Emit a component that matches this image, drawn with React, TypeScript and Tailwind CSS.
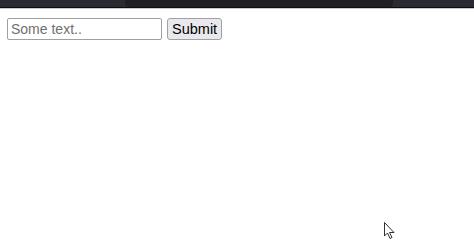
import React from 'react';

const App = () => {
  return (
    <div className="relative w-[474px] h-[248px] bg-white overflow-hidden font-['Liberation_Sans',Arial,sans-serif]">
      {/* Top bar */}
      <div className="flex h-[7px] bg-[#2b2a33]">
        <div className="ml-[125px] w-[268px] bg-[#1f1e25] rounded-b-sm" />
      </div>
      <div className="h-px bg-[#0c0c0d]" />
      <div className="h-px bg-[#c8c8c8]" />

      {/* Form */}
      <form className="flex items-center gap-[5px] pl-[7px] pt-[9px]" onSubmit={(e) => e.preventDefault()}>
        <input
          type="text"
          placeholder="Some text.."
          className="w-[155px] h-[22px] px-[3px] text-[14px] text-black border border-[#a0a0a0] rounded-[2px] placeholder:text-[#6f6f6f] outline-none"
        />
        <button
          type="submit"
          className="h-[22px] px-[4px] text-[14.5px] text-black bg-[#e9e9ed] border border-[#a0a0a8] rounded-[3px]"
        >
          Submit
        </button>
      </form>

      {/* Mouse cursor */}
      <svg className="absolute left-[384px] top-[222px]" width="12" height="18" viewBox="0 0 12 18">
        <path d="M0.5 0.5 L0.5 14 L3.5 11 L6 16.5 L8 15.5 L5.5 10.5 L10 10.5 Z" fill="#fff" stroke="#333" strokeWidth="1" strokeLinejoin="round" />
      </svg>
    </div>
  );
};

export default App;
